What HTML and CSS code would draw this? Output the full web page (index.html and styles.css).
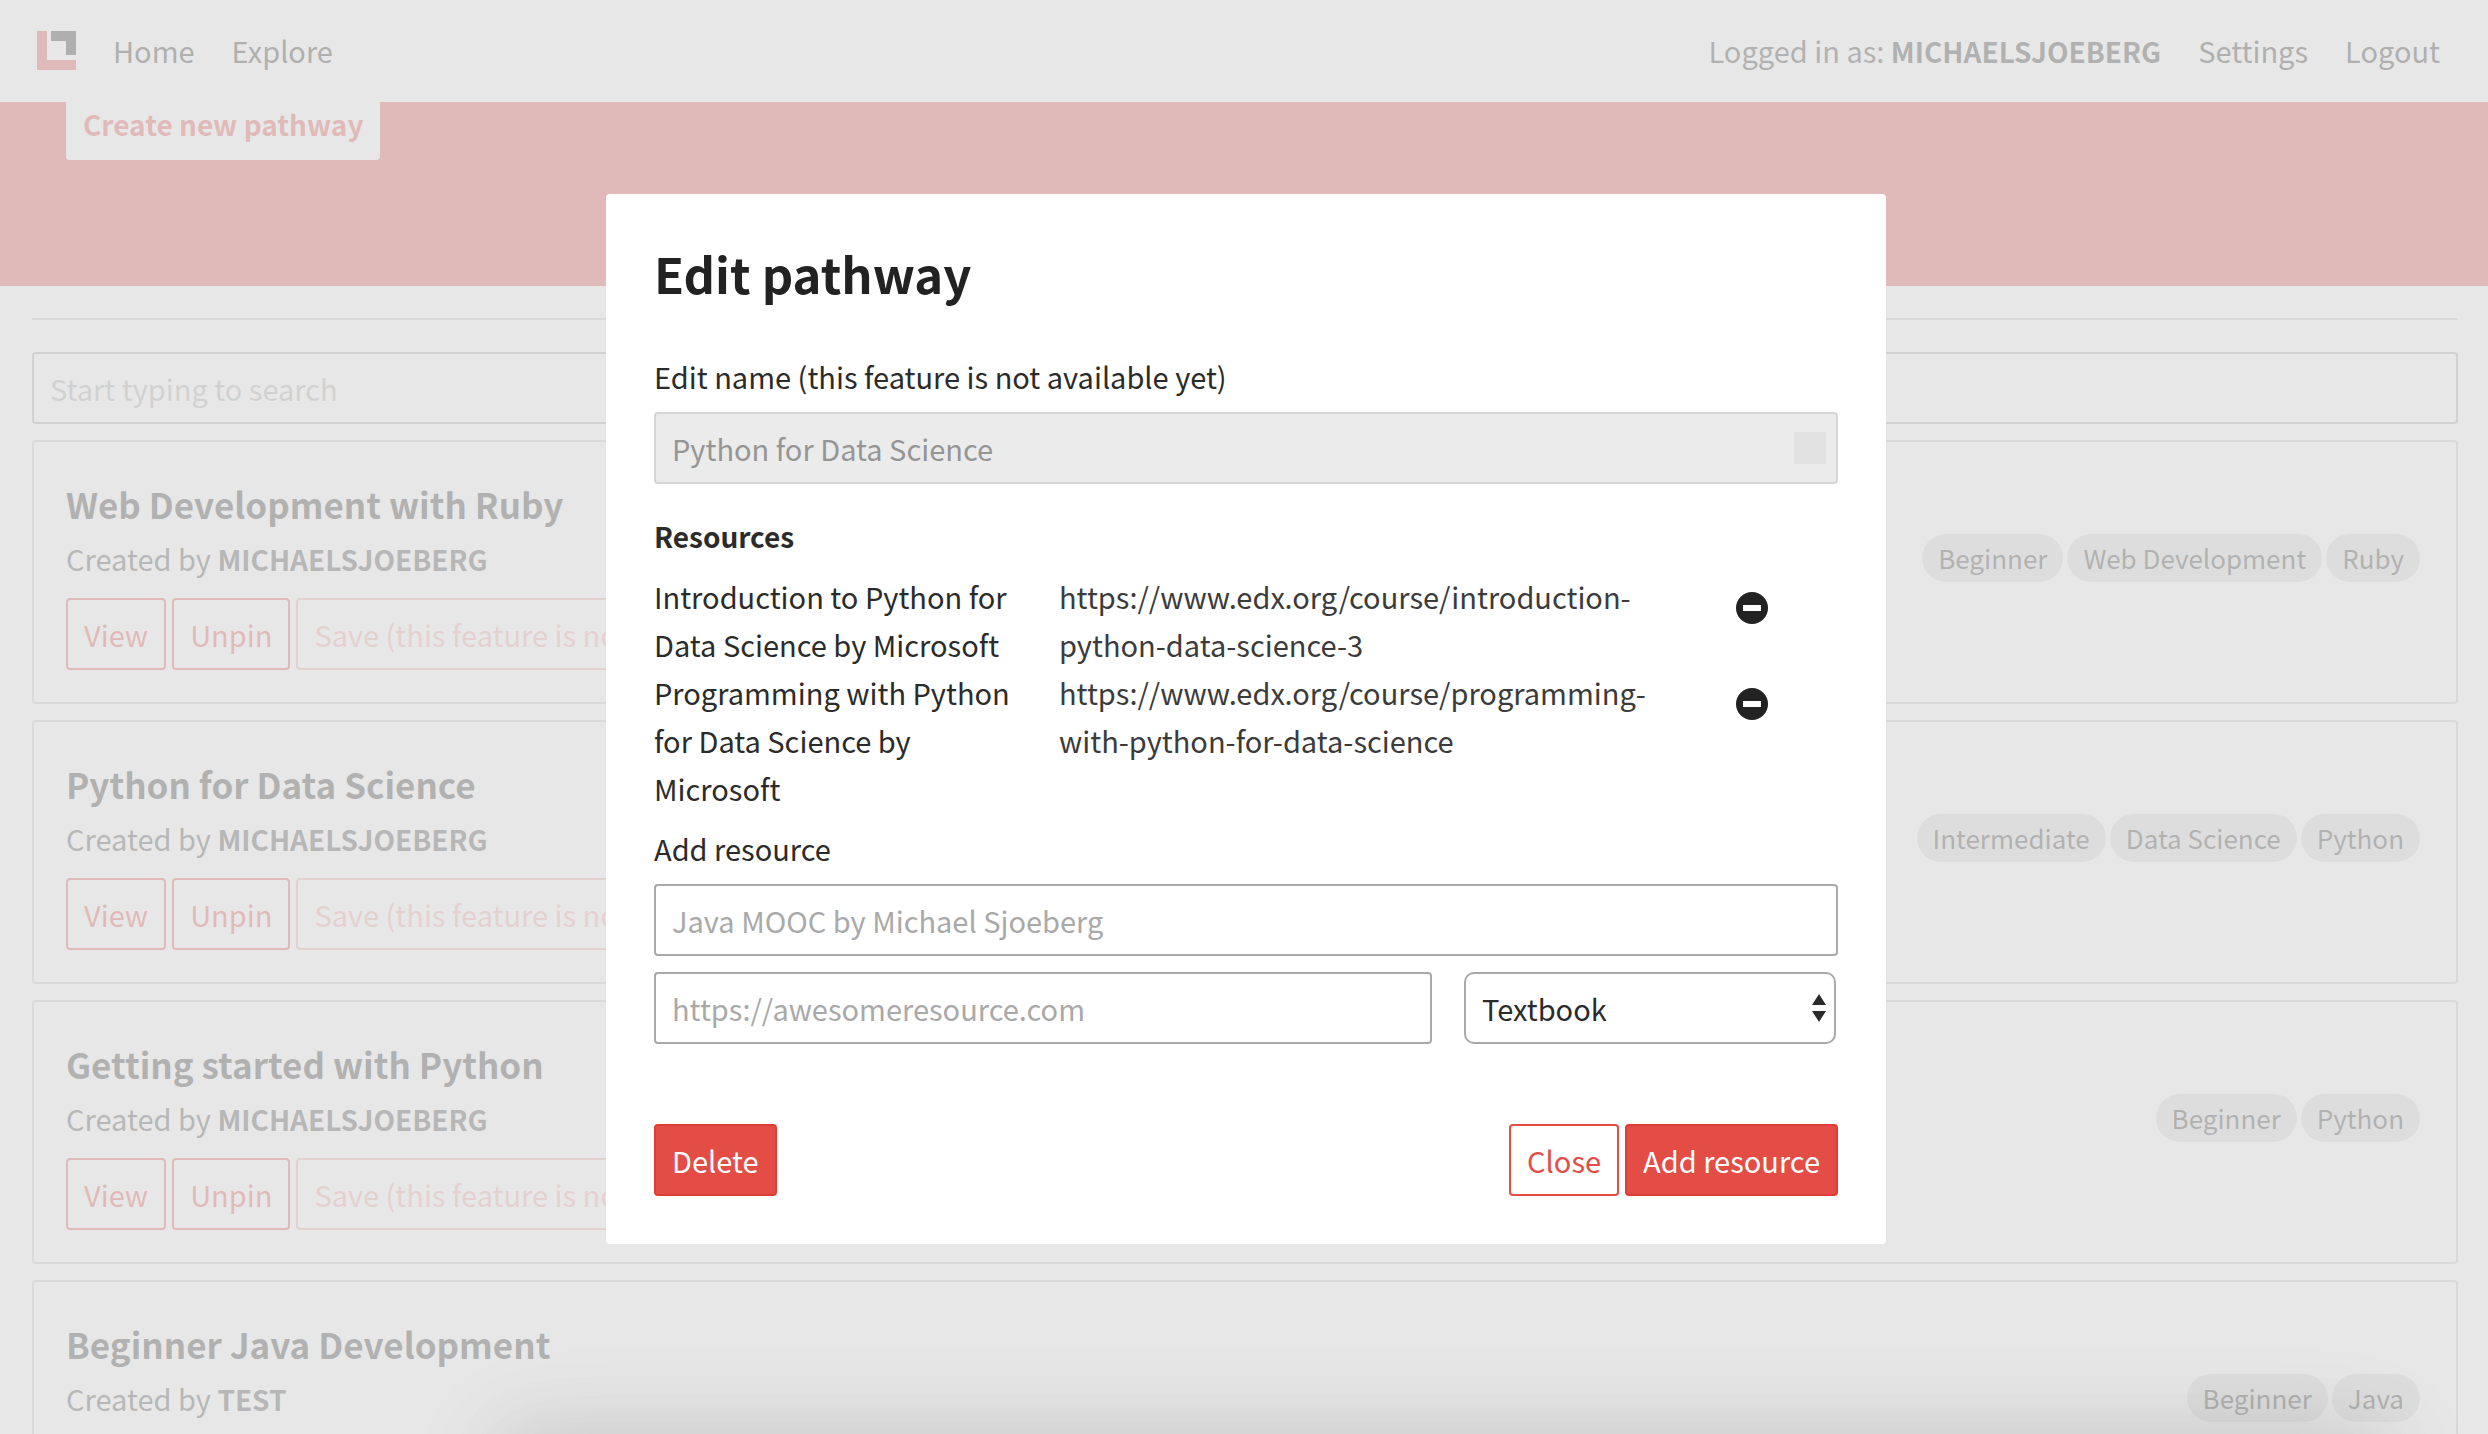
FILE: index.html
```
<!DOCTYPE html>
<html lang="en">
<head>
    <meta charset="utf-8">
    <title>Pathways</title>
    <link rel="stylesheet" href="styles.css">
</head>
<body>
    <nav class="navbar">
        <a href="/" class="logo" aria-label="Start">
            <svg width="39" height="39" viewBox="0 0 39 39">
                <path fill="#e34d46" d="M0 0h10v29h29v10H0z"/>
                <path fill="#222" d="M14 0h25v24H29V10H14z"/>
            </svg>
        </a>
        <a href="/">Home</a>
        <a href="/explore">Explore</a>
        <span class="user">Logged in as: <strong>MICHAELSJOEBERG</strong></span>
        <a href="/settings">Settings</a>
        <a href="/logout">Logout</a>
    </nav>

    <header class="hero">
        <button type="button" class="button button-white">Create new pathway</button>
    </header>

    <main class="content">
        <hr>
        <input type="search" class="input" placeholder="Start typing to search" aria-label="Search">

        <article class="card">
            <div class="card-body">
                <h2>Web Development with Ruby</h2>
                <p>Created by <strong>MICHAELSJOEBERG</strong></p>
                <div class="buttons">
                    <button type="button" class="button">View</button>
                    <button type="button" class="button">Unpin</button>
                    <button type="button" class="button" disabled>Save (this feature is not available yet)</button>
                </div>
            </div>
            <div class="tags">
                <span class="tag">Beginner</span>
                <span class="tag">Web Development</span>
                <span class="tag">Ruby</span>
            </div>
        </article>

        <article class="card">
            <div class="card-body">
                <h2>Python for Data Science</h2>
                <p>Created by <strong>MICHAELSJOEBERG</strong></p>
                <div class="buttons">
                    <button type="button" class="button">View</button>
                    <button type="button" class="button">Unpin</button>
                    <button type="button" class="button" disabled>Save (this feature is not available yet)</button>
                </div>
            </div>
            <div class="tags">
                <span class="tag">Intermediate</span>
                <span class="tag">Data Science</span>
                <span class="tag">Python</span>
            </div>
        </article>

        <article class="card">
            <div class="card-body">
                <h2>Getting started with Python</h2>
                <p>Created by <strong>MICHAELSJOEBERG</strong></p>
                <div class="buttons">
                    <button type="button" class="button">View</button>
                    <button type="button" class="button">Unpin</button>
                    <button type="button" class="button" disabled>Save (this feature is not available yet)</button>
                </div>
            </div>
            <div class="tags">
                <span class="tag">Beginner</span>
                <span class="tag">Python</span>
            </div>
        </article>

        <article class="card">
            <div class="card-body">
                <h2>Beginner Java Development</h2>
                <p>Created by <strong>TEST</strong></p>
            </div>
            <div class="tags">
                <span class="tag">Beginner</span>
                <span class="tag">Java</span>
            </div>
        </article>
    </main>

    <div class="overlay">
        <form class="modal" role="dialog" aria-labelledby="modal-title">
            <h1 id="modal-title">Edit pathway</h1>

            <label for="pathway-name">Edit name (this feature is not available yet)</label>
            <div class="field">
                <input type="text" id="pathway-name" class="input" value="Python for Data Science" disabled>
                <span class="field-icon"></span>
            </div>

            <h3>Resources</h3>
            <table class="resources">
                <tr>
                    <td class="resource-name">Introduction to Python for Data Science by Microsoft</td>
                    <td class="resource-url">https://www.edx.org/course/introduction-python-data-science-3</td>
                    <td>
                        <button type="button" class="remove" aria-label="Remove resource">
                            <svg width="32" height="32" viewBox="0 0 32 32">
                                <circle cx="16" cy="16" r="16" fill="#222"/>
                                <path fill="#fff" d="M7 13h18v6H7z"/>
                            </svg>
                        </button>
                    </td>
                </tr>
                <tr>
                    <td class="resource-name">Programming with Python for Data Science by Microsoft</td>
                    <td class="resource-url">https://www.edx.org/course/programming-with-python-for-data-science</td>
                    <td>
                        <button type="button" class="remove" aria-label="Remove resource">
                            <svg width="32" height="32" viewBox="0 0 32 32">
                                <circle cx="16" cy="16" r="16" fill="#222"/>
                                <path fill="#fff" d="M7 13h18v6H7z"/>
                            </svg>
                        </button>
                    </td>
                </tr>
            </table>

            <label for="resource-name">Add resource</label>
            <input type="text" id="resource-name" class="input" placeholder="Java MOOC by Michael Sjoeberg">
            <div class="row">
                <input type="url" class="input" placeholder="https://awesomeresource.com" aria-label="Resource URL">
                <div class="select">
                    <select aria-label="Resource type">
                        <option>Textbook</option>
                        <option>Course</option>
                        <option>Video</option>
                    </select>
                    <svg width="14" height="28" viewBox="0 0 14 28">
                        <path fill="#2b2b2b" d="M7 0l7 11H0zM7 28l7-11H0z"/>
                    </svg>
                </div>
            </div>

            <div class="modal-footer">
                <button type="button" class="button button-red">Delete</button>
                <div class="buttons">
                    <button type="button" class="button">Close</button>
                    <button type="submit" class="button button-red">Add resource</button>
                </div>
            </div>
        </form>
    </div>
    <div class="bottom-shadow"></div>
</body>
</html>
```
FILE: styles.css
```
* {
    box-sizing: border-box;
}
body {
    margin: 0;
    height: 100vh;
    overflow: hidden;
    background-color: #fff;
    color: #2b2b2b;
    font-family: "Source Sans Pro", "Noto Sans CJK SC", sans-serif;
    font-size: 29px;
    line-height: 48px;
}
h1, h2, h3, p {
    margin: 0;
}
h1 {
    color: #222;
    font-size: 49px;
    line-height: 62px;
    margin-bottom: 48px;
}
h2 {
    font-size: 35px;
    line-height: 60px;
}
h3 {
    font-size: 28px;
    margin: 28px 0 12px;
}
strong {
    font-size: 28px;
    line-height: 1;
}
input, select, button {
    font: inherit;
}

/* navbar */
.navbar {
    position: fixed;
    top: 0;
    left: 0;
    right: 0;
    height: 102px;
    padding: 0 48px 2px 37px;
    display: flex;
    align-items: center;
    gap: 37px;
    background-color: #fff;
}
.navbar a {
    color: #222;
    text-decoration: none;
}
.logo {
    display: flex;
}
.user {
    margin-left: auto;
}

/* page */
.hero {
    padding: 88px 66px 126px;
    background-color: #e34d46;
}
.hero .button {
    display: block;
}
.content {
    padding: 32px 30px 32px 32px;
}
hr {
    margin: 0 0 32px;
    border: 0;
    border-top: 2px solid #c8c8c8;
}
.card {
    display: flex;
    justify-content: space-between;
    margin-top: 16px;
    padding: 32px;
    border: 2px solid #c8c8c8;
    border-radius: 4px;
}
.card p {
    color: #404040;
    margin-bottom: 16px;
}
.buttons {
    display: flex;
    gap: 6px;
}
.tags {
    display: flex;
    align-items: flex-start;
    gap: 4px;
    padding: 60px 4px 0 0;
}
.tag {
    padding: 0 16px;
    border-radius: 24px;
    background-color: #d8d8d8;
    font-size: 26px;
}

/* controls */
.button {
    height: 72px;
    padding: 0 16px;
    border: 2px solid #e34d46;
    border-radius: 4px;
    background-color: #fff;
    color: #e34d46;
    cursor: pointer;
}
.button:disabled {
    opacity: 0.5;
}
.button-white {
    padding: 0 15px;
    border-color: #fff;
    font-size: 28px;
    font-weight: bold;
}
.button-red {
    border-color: #df3e37;
    background-color: #e34d46;
    color: #fff;
}
.input {
    display: block;
    width: 100%;
    height: 72px;
    padding: 0 16px;
    border: 2px solid #a9a9a9;
    border-radius: 4px;
    background-color: #fff;
    color: #2b2b2b;
}
.input::placeholder {
    color: #a9a9a9;
}
.input:disabled {
    border-color: #d5d5d5;
    background-color: #ebebeb;
    color: #959595;
}

/* modal */
.overlay {
    position: fixed;
    top: 0;
    left: 0;
    right: 0;
    bottom: 0;
    padding: 194px 0 0 4px;
    background-color: rgba(223, 223, 223, 0.75);
}
.modal {
    max-width: 1280px;
    margin: 0 auto;
    padding: 48px;
    border-radius: 4px;
    background-color: #fff;
}
.modal label {
    display: block;
    margin-bottom: 12px;
}
.field {
    position: relative;
}
.field-icon {
    position: absolute;
    top: 20px;
    right: 12px;
    width: 32px;
    height: 32px;
    background-color: #e2e2e2;
}
.resources {
    width: 100%;
    margin-bottom: 12px;
    border-collapse: collapse;
    table-layout: fixed;
}
.resources td {
    padding: 0;
    vertical-align: top;
}
.resources .resource-name {
    width: 405px;
    padding-right: 32px;
}
.resources .resource-url {
    width: 677px;
    padding-right: 32px;
    color: #3b3b3b;
}
.remove {
    display: block;
    margin-top: 20px;
    padding: 0;
    border: 0;
    background: none;
    cursor: pointer;
}
.remove svg {
    display: block;
}
.row {
    display: flex;
    gap: 32px;
    margin-top: 16px;
    padding-right: 2px;
}
.row .input {
    flex: 1;
}
.select {
    position: relative;
    width: 372px;
}
.select select {
    display: block;
    width: 100%;
    height: 72px;
    padding: 0 16px;
    border: 2px solid #a9a9a9;
    border-radius: 10px;
    background-color: #fff;
    color: #2b2b2b;
    appearance: none;
}
.select svg {
    position: absolute;
    top: 22px;
    right: 10px;
    pointer-events: none;
}
.modal-footer {
    display: flex;
    justify-content: space-between;
    margin-top: 80px;
}

.bottom-shadow {
    position: fixed;
    top: 100%;
    left: 500px;
    right: 100px;
    height: 100px;
    box-shadow: 0 0 90px rgba(0, 0, 0, 0.16);
}
```
